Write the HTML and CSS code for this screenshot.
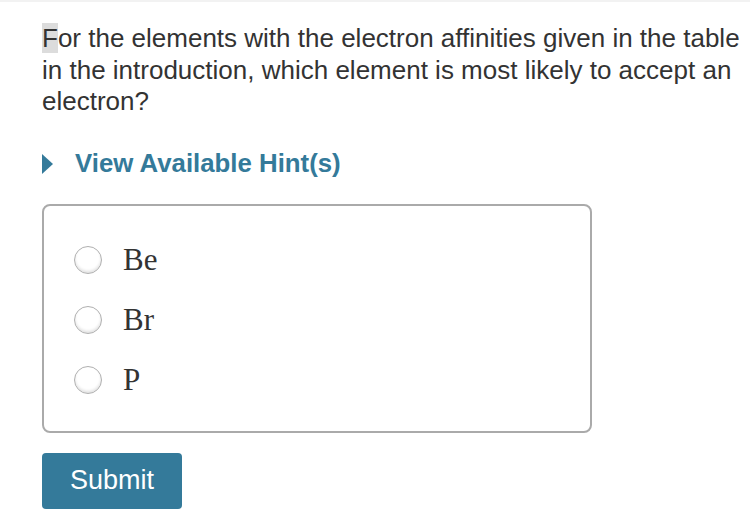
FILE: index.html
```html
<!DOCTYPE html>
<html>
	<head>
		<meta charset="UTF-8">
		<title>Question</title>
		<link rel="stylesheet" href="styles.css">
	</head>
	<body>
		<div class="topbar"></div>
		<div class="question">
			<p class="prompt"><span class="mark">F</span>or the elements with the electron affinities given in the table in the introduction, which element is most likely to accept an electron?</p>
			<div class="hint"><span class="arrow"></span>View Available Hint(s)</div>
			<div class="choices">
				<label class="choice"><span class="radio"></span><span class="label">Be</span></label>
				<label class="choice"><span class="radio"></span><span class="label">Br</span></label>
				<label class="choice"><span class="radio"></span><span class="label">P</span></label>
			</div>
			<button class="submit">Submit</button>
		</div>
	</body>
</html>
```

FILE: styles.css
```css
*{
	margin: 0;
	padding: 0;
	box-sizing: border-box;
}

body{
	font-family: "Liberation Sans", Arial, sans-serif;
	background: #fff;
	color: #333;
}

.topbar{
	height: 2px;
	background: #f2f2f2;
}

.question{
	padding: 0 0 0 42px;
}

.prompt{
	font-size: 26px;
	line-height: 31.5px;
	padding-top: 21px;
	width: 706px;
}

.mark{
	background: #dcdcdc;
}

.hint{
	display: flex;
	align-items: center;
	margin-top: 31px;
	font-size: 25.8px;
	font-weight: bold;
	color: #347a9a;
	height: 30px;
}

.arrow{
	width: 0;
	height: 0;
	border-top: 10px solid transparent;
	border-bottom: 10px solid transparent;
	border-left: 11px solid #347a9a;
	margin-right: 22px;
}

.choices{
	margin-top: 25px;
	width: 550px;
	border: 2px solid #aaa;
	border-radius: 8px;
	padding: 24px 0 21px 30px;
}

.choice{
	display: flex;
	align-items: center;
	height: 60px;
}

.radio{
	width: 28px;
	height: 28px;
	border-radius: 50%;
	border: 1px solid #b0b0b0;
	background: #fff;
	box-shadow: inset 0 -2px 3px rgba(0,0,0,0.12);
	margin-right: 21px;
}

.label{
	font-family: "Liberation Serif", "Times New Roman", serif;
	font-size: 31px;
	color: #333;
}

.submit{
	margin-top: 20px;
	width: 140px;
	height: 56px;
	border: 0;
	border-radius: 4px;
	background: #347a9a;
	color: #fff;
	font-family: "Liberation Sans", Arial, sans-serif;
	font-size: 27px;
}
```
